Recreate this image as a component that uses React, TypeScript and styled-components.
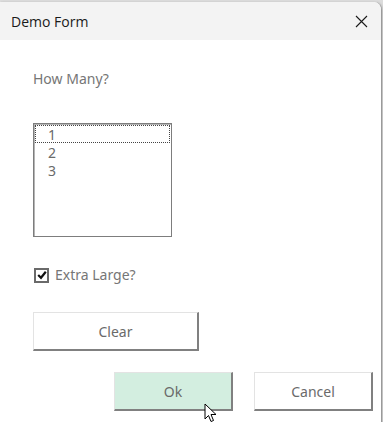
import React from "react";
import styled, { createGlobalStyle } from "styled-components";

const Global = createGlobalStyle`
  html, body { margin: 0; padding: 0; background: #d6d6d6; overflow: hidden; }
  body { width: 383px; height: 422px; font-family: "Noto Sans", "Open Sans", sans-serif; }
`;

const Stage = styled.div`
  width: 383px;
  height: 422px;
  padding-top: 2px;
  box-sizing: border-box;
  background: #dcdcdc;
  overflow: hidden;
`;

const Window = styled.div`
  width: 381px;
  height: 440px;
  background: #ffffff;
  border-right: 1px solid #9a9a9a;
  border-top-right-radius: 8px;
  box-shadow: 1px 0 2px rgba(0, 0, 0, 0.15);
  overflow: hidden;
  display: flex;
  flex-direction: column;
`;

const TitleBar = styled.div`
  height: 38px;
  background: #f3f3f3;
  display: flex;
  align-items: center;
  justify-content: space-between;
  padding: 0 13px 0 11px;
  flex-shrink: 0;
`;

const Title = styled.span`
  font-family: "Open Sans", "Noto Sans", sans-serif;
  font-size: 14px;
  color: #1a1a1a;
`;

const Body = styled.div`
  display: flex;
  flex-direction: column;
  padding: 30px 0 0 33px;
`;

const Label = styled.div`
  font-family: "Noto Sans", sans-serif;
  font-size: 14px;
  color: #767676;
  height: 18px;
  line-height: 18px;
`;

const ListBox = styled.div`
  margin-top: 35px;
  width: 139px;
  height: 114px;
  box-sizing: border-box;
  border: 1px solid #7d7d7d;
  box-shadow: inset 1px 1px 0 #b5b5b5;
  padding: 1px;
  display: flex;
  flex-direction: column;
`;

const Item = styled.div<{ $focused?: boolean }>`
  height: 18px;
  line-height: 17px;
  padding-left: 12px;
  font-family: "Noto Sans", sans-serif;
  font-size: 14px;
  color: #6a6a6a;
  box-sizing: border-box;
  border: 1px dotted ${(p) => (p.$focused ? "#444" : "transparent")};
`;

const CheckRow = styled.label`
  margin-top: 29px;
  display: flex;
  align-items: center;
  gap: 6px;
  height: 18px;
`;

const Box = styled.span`
  width: 15px;
  height: 15px;
  box-sizing: border-box;
  border: 2px solid #6a6a6a;
  background: #fff;
  display: flex;
  align-items: center;
  justify-content: center;
  margin-left: 1px;
`;

const Button = styled.div<{ $bg?: string; $w: number }>`
  width: ${(p) => p.$w}px;
  height: 39px;
  box-sizing: border-box;
  background: ${(p) => p.$bg || "#ffffff"};
  border-top: 1px solid #e3e3e3;
  border-left: 1px solid #e3e3e3;
  border-right: 2px solid #808080;
  border-bottom: 2px solid #808080;
  display: flex;
  align-items: center;
  justify-content: center;
  font-family: "Noto Sans", sans-serif;
  font-size: 14px;
  color: #6a6a6a;
`;

const ClearWrap = styled.div`
  margin-top: 28px;
`;

const Footer = styled.div`
  margin-top: 21px;
  display: flex;
  gap: 21px;
  padding-left: 81px;
`;

const Cursor = styled.svg`
  position: absolute;
  left: 204px;
  top: 403px;
`;

export default function App() {
  return (
    <>
      <Global />
      <Stage>
        <Window>
          <TitleBar>
            <Title>Demo Form</Title>
            <svg width="13" height="13" viewBox="0 0 13 13">
              <path d="M1 1 L12 12 M12 1 L1 12" stroke="#1a1a1a" strokeWidth="1.1" />
            </svg>
          </TitleBar>
          <Body>
            <Label>How Many?</Label>
            <ListBox>
              <Item $focused>1</Item>
              <Item>2</Item>
              <Item>3</Item>
            </ListBox>
            <CheckRow>
              <Box>
                <svg width="10" height="10" viewBox="0 0 10 10">
                  <path d="M1.2 5 L4 7.8 L8.8 1.8" fill="none" stroke="#111" strokeWidth="2.2" />
                </svg>
              </Box>
              <Label>Extra Large?</Label>
            </CheckRow>
            <ClearWrap>
              <Button $w={166}>Clear</Button>
            </ClearWrap>
            <Footer>
              <Button $w={119} $bg="#d3eee0">Ok</Button>
              <Button $w={119}>Cancel</Button>
            </Footer>
          </Body>
        </Window>
      </Stage>
      <Cursor width="13" height="20" viewBox="0 0 13 20">
        <path d="M1 1 L1 16 L4.5 12.5 L7 18.5 L9.5 17.5 L7 11.5 L12 11.5 Z" fill="#fff" stroke="#000" strokeWidth="1" />
      </Cursor>
    </>
  );
}
